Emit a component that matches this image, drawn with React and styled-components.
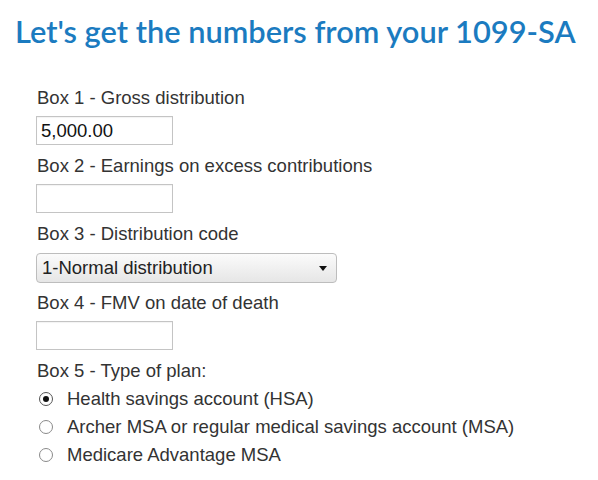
import styled, { createGlobalStyle } from 'styled-components';

const Global = createGlobalStyle`
  body {
    margin: 0;
    background: #fff;
    font-family: "Liberation Sans", Arial, sans-serif;
  }
`

const Page = styled.div`
  padding: 12px 15px;
`

const Title = styled.h1`
  margin: 0;
  font-family: Lato, "Open Sans", sans-serif;
  font-weight: 600;
  font-size: 30.8px;
  line-height: 40px;
  color: #1b7bc0;
`

const Form = styled.div`
  display: flex;
  flex-direction: column;
  padding: 35px 0 0 21px;
`

const Label = styled.div`
  font-size: 18.5px;
  line-height: 22px;
  color: #333;
  margin-bottom: 7px;
  margin-left: 1px;
`

const TextInput = styled.input`
  box-sizing: border-box;
  width: 137px;
  height: 29px;
  border: 1px solid #c4c4c4;
  border-radius: 0;
  padding: 2px 4px;
  font-family: "Liberation Sans", Arial, sans-serif;
  font-size: 18.5px;
  color: #111;
  margin-bottom: 10px;
  box-shadow: inset 0 1px 1px rgba(0,0,0,0.05);
`

const SelectBox = styled.div`
  box-sizing: border-box;
  width: 301px;
  height: 30px;
  display: flex;
  align-items: center;
  justify-content: space-between;
  padding: 0 9px 0 5px;
  border: 1px solid #bdbdbd;
  border-radius: 4px;
  background: linear-gradient(#fbfbfb, #e6e6e6);
  font-size: 18.5px;
  color: #222;
  margin-top: 1px;
  margin-bottom: 9px;
`

const Caret = styled.span`
  width: 0;
  height: 0;
  border-left: 4px solid transparent;
  border-right: 4px solid transparent;
  border-top: 5px solid #111;
`

const Options = styled.div`
  display: flex;
  flex-direction: column;
  gap: 6px;
  margin-top: -1px;
`

const Option = styled.label`
  display: flex;
  align-items: center;
  gap: 14px;
  font-size: 18.5px;
  line-height: 22px;
  color: #333;
  padding-left: 3px;
`

const Radio = styled.span`
  box-sizing: border-box;
  width: 14px;
  height: 14px;
  border-radius: 50%;
  border: 1px solid ${p => (p.checked ? '#555' : '#8a8a8a')};
  background: #fff;
  display: flex;
  align-items: center;
  justify-content: center;
  &::after {
    content: '';
    width: 6px;
    height: 6px;
    border-radius: 50%;
    background: ${p => (p.checked ? '#111' : 'transparent')};
  }
`

const plans = [
  'Health savings account (HSA)',
  'Archer MSA or regular medical savings account (MSA)',
  'Medicare Advantage MSA',
]

function App() {
  return (
    <Page>
      <Global />
      <Title>Let's get the numbers from your 1099-SA</Title>
      <Form>
        <Label>Box 1 - Gross distribution</Label>
        <TextInput defaultValue="5,000.00" />
        <Label>Box 2 - Earnings on excess contributions</Label>
        <TextInput />
        <Label>Box 3 - Distribution code</Label>
        <SelectBox>
          <span>1-Normal distribution</span>
          <Caret />
        </SelectBox>
        <Label>Box 4 - FMV on date of death</Label>
        <TextInput />
        <Label>Box 5 - Type of plan:</Label>
        <Options>
          {plans.map((p, i) => (
            <Option key={p}>
              <Radio checked={i === 0} />
              {p}
            </Option>
          ))}
        </Options>
      </Form>
    </Page>
  );
}

export default App;
